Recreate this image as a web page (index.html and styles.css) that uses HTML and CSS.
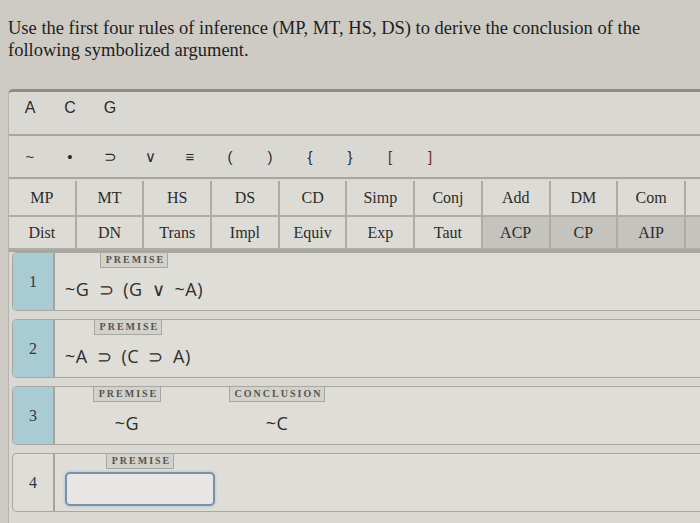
FILE: index.html
```html
<!DOCTYPE html>
<html>
<head>
<meta charset="utf-8">
<link rel="stylesheet" href="styles.css">
</head>
<body>
<div class="prompt">Use the first four rules of inference (MP, MT, HS, DS) to derive the conclusion of the following symbolized argument.</div>
<div class="panel">
  <div class="vars">
    <span class="key">A</span><span class="key">C</span><span class="key">G</span>
  </div>
  <div class="syms">
    <span class="key">~</span><span class="key">•</span><span class="key">⊃</span><span class="key">∨</span><span class="key">≡</span><span class="key">(</span><span class="key">)</span><span class="key">{</span><span class="key">}</span><span class="key red">[</span><span class="key red">]</span>
  </div>
  <div class="rules">
    <div class="rule">MP</div><div class="rule">MT</div><div class="rule">HS</div><div class="rule">DS</div><div class="rule">CD</div><div class="rule">Simp</div><div class="rule">Conj</div><div class="rule">Add</div><div class="rule">DM</div><div class="rule">Com</div><div class="rule blank"></div>
    <div class="rule">Dist</div><div class="rule">DN</div><div class="rule">Trans</div><div class="rule">Impl</div><div class="rule">Equiv</div><div class="rule">Exp</div><div class="rule">Taut</div><div class="rule dark">ACP</div><div class="rule dark">CP</div><div class="rule dark">AIP</div><div class="rule dark blank"></div>
  </div>
  <div class="proof">
    <div class="line">
      <div class="num blue">1</div>
      <div class="body">
        <div class="slot"><span class="tag">PREMISE</span><span class="formula">~G ⊃ (G ∨ ~A)</span></div>
      </div>
    </div>
    <div class="line">
      <div class="num blue">2</div>
      <div class="body">
        <div class="slot"><span class="tag">PREMISE</span><span class="formula">~A ⊃ (C ⊃ A)</span></div>
      </div>
    </div>
    <div class="line">
      <div class="num blue">3</div>
      <div class="body">
        <div class="slot"><span class="tag">PREMISE</span><span class="formula">~G</span></div>
        <div class="slot concl"><span class="tag">CONCLUSION</span><span class="formula">~C</span></div>
      </div>
    </div>
    <div class="line">
      <div class="num">4</div>
      <div class="body">
        <div class="slot"><span class="tag">PREMISE</span><span class="input"></span></div>
      </div>
    </div>
  </div>
</div>
</body>
</html>
```
FILE: styles.css
```css
html, body {
  margin: 0;
  padding: 0;
  background: #cecbc5;
  overflow: hidden;
}
body {
  width: 700px;
  height: 523px;
}
.prompt {
  font-family: "Liberation Serif", serif;
  font-size: 18.5px;
  line-height: 22px;
  color: #1e1e1e;
  padding: 17px 30px 0 8px;
}
.panel {
  margin: 28px 0 0 8px;
  background: #dad8d2;
  border-top: 3px solid #8e8c87;
  border-left: 1px solid #b5b3ad;
  border-radius: 5px 0 0 0;
  height: 440px;
}
.vars, .syms {
  display: flex;
  padding-left: 1px;
  font-family: "Liberation Sans", sans-serif;
  color: #2a2a2a;
}
.vars {
  height: 32px;
  padding-bottom: 10px;
  align-items: center;
  font-size: 16px;
  border-bottom: 2px solid #a7a5a0;
}
.syms {
  height: 41px;
  align-items: center;
  font-size: 15px;
  border-bottom: 2px solid #a7a5a0;
}
.key {
  width: 40px;
  text-align: center;
}
.red {
  color: #6d2b2b;
}
.rules {
  display: grid;
  grid-template-columns: repeat(10, 67.7px) 1fr;
  grid-template-rows: 36px 33px;
  margin-top: 2px;
  border-bottom: 2px solid #a7a5a0;
}
.rule {
  display: flex;
  align-items: center;
  justify-content: center;
  font-family: "Liberation Serif", serif;
  font-size: 16px;
  color: #2b2b2b;
  background: #dddbd5;
  border-right: 2px solid #aeaca7;
  border-bottom: 2px solid #aeaca7;
}
.rule.dark {
  background: #c5c3bd;
}
.rule.blank {
  border-right: none;
}
.proof {
  display: flex;
  flex-direction: column;
  gap: 8px;
  padding: 0 0 0 3px;
}
.line {
  display: flex;
  height: 57px;
  background: #dfddd7;
  border: 1px solid #a9a7a2;
  border-right: none;
  border-radius: 5px 0 0 5px;
}
.num {
  width: 40px;
  display: flex;
  align-items: center;
  justify-content: center;
  font-family: "Liberation Serif", serif;
  font-size: 16px;
  color: #2e3840;
  border-right: 2px solid #a6a4a0;
  border-radius: 4px 0 0 4px;
}
.num.blue {
  background: #a9ccd4;
}
.body {
  display: flex;
  padding-left: 10px;
  gap: 33px;
}
.slot {
  display: flex;
  flex-direction: column;
  align-items: center;
  min-width: 124px;
}
.tag {
  font-family: "Liberation Serif", serif;
  font-weight: bold;
  font-size: 10px;
  letter-spacing: 2px;
  padding: 1px 2px 1px 5px;
  color: #555450;
  background: #d3d1cb;
  border: 1px solid #a8a6a1;
  border-top: none;
  line-height: 12px;
}
.formula {
  font-family: "Open Sans", sans-serif;
  font-size: 18px;
  letter-spacing: 0.5px;
  word-spacing: 4px;
  color: #2e2e2e;
  margin-top: 9px;
  white-space: nowrap;
}
.concl {
  min-width: 110px;
}
.input {
  display: block;
  width: 146px;
  height: 30px;
  margin-top: 3px;
  background: #e7e6e3;
  border: 2px solid #7891ad;
  border-radius: 5px;
  box-shadow: 0 0 3px #9ab7d2;
}
```
